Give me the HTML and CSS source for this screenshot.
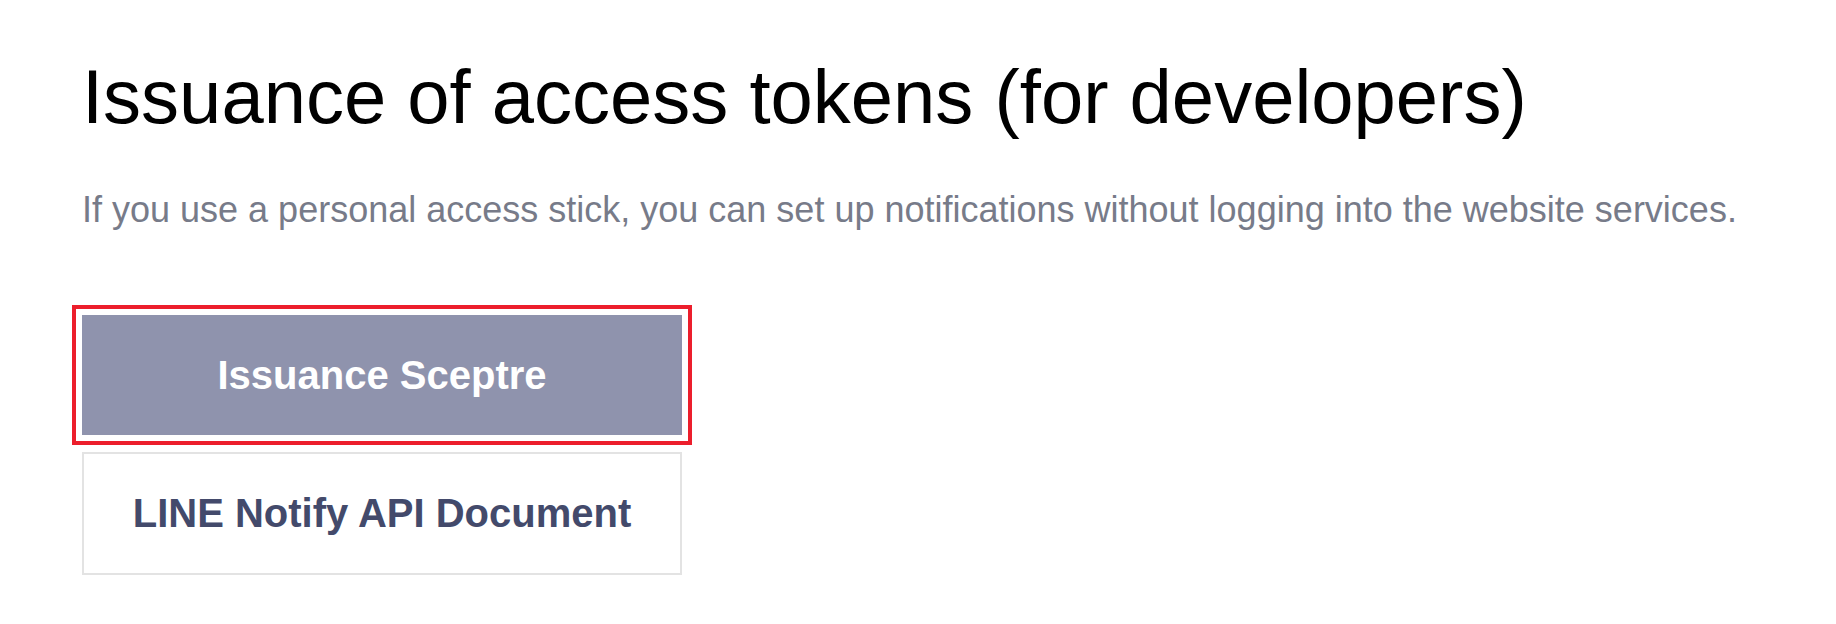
FILE: index.html
```html
<!DOCTYPE html>
<html lang="en">
<head>
<meta charset="utf-8">
<title>Issuance of access tokens (for developers)</title>
<link rel="stylesheet" href="styles.css">
</head>
<body>
<main class="page">
  <h1 class="title">Issuance of access tokens (for developers)</h1>
  <p class="lead">If you use a personal access stick, you can set up notifications without logging into the website services.</p>
  <div class="actions">
    <a class="btn btn-primary" href="#">Issuance Sceptre</a>
    <a class="btn btn-secondary" href="#">LINE Notify API Document</a>
  </div>
</main>
</body>
</html>
```

FILE: styles.css
```css
html, body {
  margin: 0;
  padding: 0;
  background: #ffffff;
}

body {
  font-family: "Liberation Sans", Arial, sans-serif;
}

.page {
  padding: 53px 0 0 82px;
}

.title {
  margin: 0;
  font-size: 76px;
  font-weight: normal;
  line-height: 87px;
  color: #000000;
}

.lead {
  margin: 49px 0 0 0;
  font-size: 36px;
  line-height: 41px;
  color: #777b89;
}

.actions {
  margin-top: 85px;
  width: 600px;
  display: flex;
  flex-direction: column;
  gap: 17px;
}

.btn {
  display: flex;
  align-items: center;
  justify-content: center;
  box-sizing: border-box;
  font-size: 40px;
  font-weight: bold;
  text-decoration: none;
}

.btn-primary {
  height: 120px;
  background: #8f93ad;
  color: #ffffff;
  outline: 4px solid #ec1e2c;
  outline-offset: 6px;
}

.btn-secondary {
  height: 123px;
  background: #ffffff;
  color: #434a6b;
  border: 2px solid #e3e3e3;
}
```
